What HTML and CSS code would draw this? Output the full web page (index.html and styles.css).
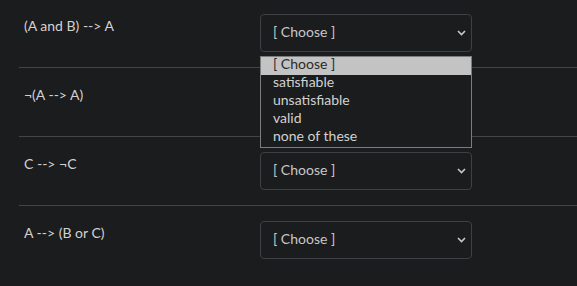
FILE: index.html
```html
<!DOCTYPE html>
<html lang="en">
<head>
    <meta charset="UTF-8">
    <meta name="viewport" content="width=device-width, initial-scale=1.0">
    <title>Classify the formulas</title>
    <link rel="stylesheet" href="styles.css">
</head>
<body>
    <div class="quiz">
        <div class="row first">
            <div class="formula">(A and B) --&gt; A</div>
            <div class="choice">
                <select class="answer">
                    <option>[ Choose ]</option>
                    <option>satisfiable</option>
                    <option>unsatisfiable</option>
                    <option>valid</option>
                    <option>none of these</option>
                </select>
                <svg class="chevron" width="9" height="6" viewBox="0 0 9 6"><path d="M1 1l3.5 3.5L8 1" fill="none" stroke="#c8c8c8" stroke-width="1.6"/></svg>
                <ul class="dropdown">
                    <li class="active">[ Choose ]</li>
                    <li>satisfiable</li>
                    <li>unsatisfiable</li>
                    <li>valid</li>
                    <li>none of these</li>
                </ul>
            </div>
        </div>
        <div class="row">
            <div class="formula">¬(A --&gt; A)</div>
            <div class="choice">
                <select class="answer">
                    <option>[ Choose ]</option>
                    <option>satisfiable</option>
                    <option>unsatisfiable</option>
                    <option>valid</option>
                    <option>none of these</option>
                </select>
                <svg class="chevron" width="9" height="6" viewBox="0 0 9 6"><path d="M1 1l3.5 3.5L8 1" fill="none" stroke="#c8c8c8" stroke-width="1.6"/></svg>
            </div>
        </div>
        <div class="row">
            <div class="formula">C --&gt; ¬C</div>
            <div class="choice">
                <select class="answer">
                    <option>[ Choose ]</option>
                    <option>satisfiable</option>
                    <option>unsatisfiable</option>
                    <option>valid</option>
                    <option>none of these</option>
                </select>
                <svg class="chevron" width="9" height="6" viewBox="0 0 9 6"><path d="M1 1l3.5 3.5L8 1" fill="none" stroke="#c8c8c8" stroke-width="1.6"/></svg>
            </div>
        </div>
        <div class="row last">
            <div class="formula">A --&gt; (B or C)</div>
            <div class="choice">
                <select class="answer">
                    <option>[ Choose ]</option>
                    <option>satisfiable</option>
                    <option>unsatisfiable</option>
                    <option>valid</option>
                    <option>none of these</option>
                </select>
                <svg class="chevron" width="9" height="6" viewBox="0 0 9 6"><path d="M1 1l3.5 3.5L8 1" fill="none" stroke="#c8c8c8" stroke-width="1.6"/></svg>
            </div>
        </div>
    </div>
</body>
</html>
```

FILE: styles.css
```css
body {
    margin: 0;
    background-color: #1b1c1e;
    font-family: Lato, 'Open Sans', sans-serif;
    font-size: 14px;
    color: #d2d2d2;
}
.quiz {
    margin-left: 19px;
}
.row {
    display: flex;
    align-items: flex-start;
    padding: 15px 0;
    border-bottom: 1px solid #444547;
}
.row.first {
    padding-top: 14px;
}
.row.last {
    border-bottom: none;
}
.formula {
    width: 236px;
    padding: 1px 0 0 5px;
    line-height: 21px;
}
.choice {
    position: relative;
    width: 212px;
}
.answer {
    display: block;
    width: 100%;
    height: 38px;
    margin: 0;
    padding: 0 24px 4px 12px;
    border: 1px solid #3e4043;
    border-radius: 4px;
    background-color: #1b1c1e;
    color: #c8c8c8;
    font-family: inherit;
    font-size: 14px;
    appearance: none;
    -webkit-appearance: none;
    outline: none;
}
.chevron {
    position: absolute;
    right: 6px;
    top: 16px;
    pointer-events: none;
}
.dropdown {
    position: absolute;
    top: 42px;
    left: 0;
    width: 100%;
    box-sizing: border-box;
    margin: 0;
    padding: 0;
    list-style: none;
    border: 1px solid #7c7c7c;
    background-color: #1b1c1e;
    z-index: 2;
}
.dropdown li {
    height: 18px;
    line-height: 14px;
    padding-left: 12px;
    color: #d2d2d2;
}
.dropdown li.active {
    background-color: #c3c3c3;
    color: #2a2a2a;
}
```
